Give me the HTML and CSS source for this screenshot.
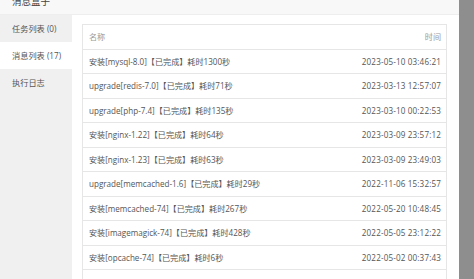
FILE: index.html
```html
<!DOCTYPE html>
<html lang="zh-CN">
<head>
<meta charset="utf-8">
<title>消息盒子</title>
<link rel="stylesheet" href="styles.css">
</head>
<body>
<div class="page">
  <div class="dialog">
    <div class="dialog-header"><span class="dialog-title">消息盒子</span></div>
    <div class="dialog-body">
      <ul class="tabs">
        <li class="tab">任务列表 (0)</li>
        <li class="tab active">消息列表 (17)</li>
        <li class="tab">执行日志</li>
      </ul>
      <div class="content">
        <div class="grid">
          <div class="row head"><span>名称</span><span>时间</span></div>
          <div class="row"><span>安装[mysql-8.0]【已完成】耗时1300秒</span><span class="time">2023-05-10 03:46:21</span></div>
          <div class="row"><span>upgrade[redis-7.0]【已完成】耗时71秒</span><span class="time">2023-03-13 12:57:07</span></div>
          <div class="row"><span>upgrade[php-7.4]【已完成】耗时135秒</span><span class="time">2023-03-10 00:22:53</span></div>
          <div class="row"><span>安装[nginx-1.22]【已完成】耗时64秒</span><span class="time">2023-03-09 23:57:12</span></div>
          <div class="row"><span>安装[nginx-1.23]【已完成】耗时63秒</span><span class="time">2023-03-09 23:49:03</span></div>
          <div class="row"><span>upgrade[memcached-1.6]【已完成】耗时29秒</span><span class="time">2022-11-06 15:32:57</span></div>
          <div class="row"><span>安装[memcached-74]【已完成】耗时267秒</span><span class="time">2022-05-20 10:48:45</span></div>
          <div class="row"><span>安装[imagemagick-74]【已完成】耗时428秒</span><span class="time">2022-05-05 23:12:22</span></div>
          <div class="row"><span>安装[opcache-74]【已完成】耗时6秒</span><span class="time">2022-05-02 00:37:43</span></div>
          <div class="row"><span></span><span></span></div>
        </div>
      </div>
    </div>
  </div>
  <div class="overlay"></div>
</div>
</body>
</html>
```
FILE: styles.css
```css
html, body {
  margin: 0;
  padding: 0;
}
body {
  width: 474px;
  height: 279px;
  overflow: hidden;
  background: #8e8e8e;
  font-family: "Open Sans", "Noto Sans CJK SC", sans-serif;
  font-size: 8.1px;
  color: #555;
}
.page {
  display: flex;
  height: 279px;
}
.dialog {
  width: 459px;
  flex: none;
  display: flex;
  flex-direction: column;
  background: #fff;
}
.dialog-header {
  height: 15px;
  box-sizing: border-box;
  background: #f8f8f8;
  border-bottom: 1px solid #eee;
  overflow: hidden;
  padding-left: 12px;
}
.dialog-title {
  display: block;
  font-size: 9.5px;
  line-height: 12px;
  margin-top: -4px;
  color: #444;
}
.dialog-body {
  flex: 1;
  display: flex;
  min-height: 0;
}
.tabs {
  list-style: none;
  margin: 0;
  padding: 0;
  width: 72px;
  flex: none;
  background: #f0f0f0;
}
.tab {
  height: 27px;
  line-height: 27px;
  padding-left: 12px;
  font-size: 8.2px;
  color: #555;
}
.tab.active {
  background: #fff;
}
.content {
  flex: 1;
  padding: 9px 12px 0 10px;
  overflow: hidden;
}
.grid {
  border: 1px solid #e6e6e6;
  border-bottom: none;
}
.row {
  display: flex;
  justify-content: space-between;
  align-items: center;
  height: 24.5px;
  box-sizing: border-box;
  padding: 0 5px 0 6px;
  border-top: 1px solid #e6e6e6;
  white-space: nowrap;
}
.row:first-child {
  border-top: none;
  height: 23.5px;
}
.row.head {
  color: #999;
}
.time {
  letter-spacing: 0.15px;
}
.overlay {
  flex: 1;
  background: #8e8e8e;
}
```
